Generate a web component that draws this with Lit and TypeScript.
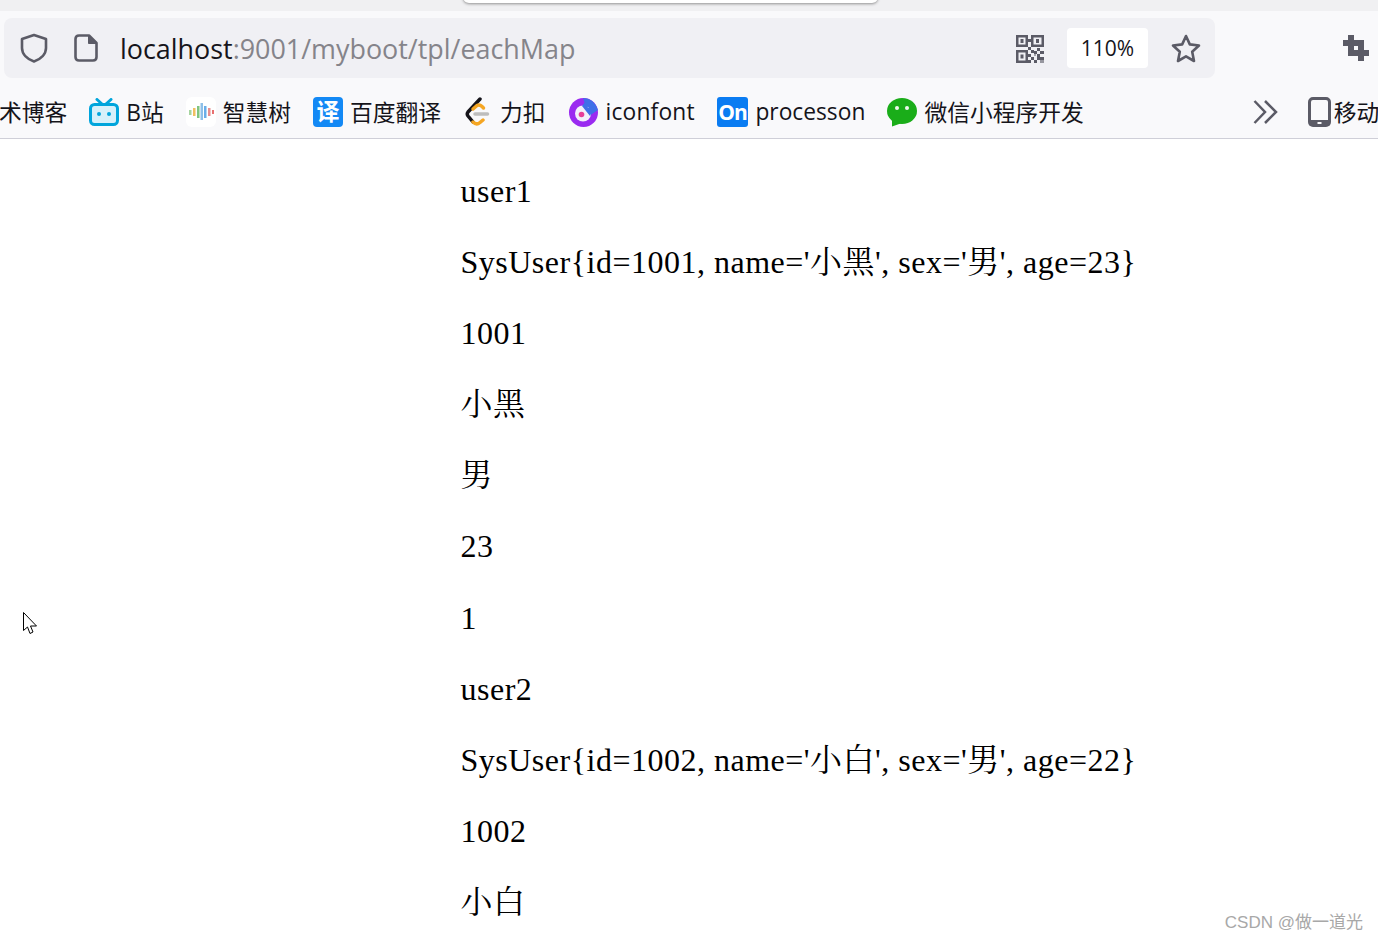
import { LitElement, html, css } from "lit";
import { customElement } from "lit/decorators.js";

const LINES = [
  "user1",
  "SysUser{id=1001, name='小黑', sex='男', age=23}",
  "1001",
  "小黑",
  "男",
  "23",
  "1",
  "user2",
  "SysUser{id=1002, name='小白', sex='男', age=22}",
  "1002",
  "小白",
];

@customElement("app-root")
export class AppRoot extends LitElement {
  static styles = css`
    :host {
      display: block;
      position: relative;
      width: 1378px;
      height: 940px;
      overflow: hidden;
      background: #fff;
    }

    .tabstrip {
      height: 11px;
      background: #f0f0f2;
    }

    .popup {
      position: absolute;
      left: 463px;
      top: -12px;
      width: 415px;
      height: 15px;
      background: #fff;
      border-radius: 6px;
      box-shadow: 0 1px 3px rgba(0,0,0,0.4);
    }

    .toolbar {
      height: 80px;
      box-sizing: border-box;
      padding: 7px 0 0 4px;
      display: flex;
      align-items: flex-start;
      background: #f9f9fb;
    }

    .urlbar {
      width: 1211px;
      height: 60px;
      box-sizing: border-box;
      padding: 0 14px 0 16px;
      display: flex;
      align-items: center;
      background: #f0f0f4;
      border-radius: 8px;
      font-family: "Open Sans", "Noto Sans CJK SC", sans-serif;
      color: #15141a;
    }

    .url {
      flex: 1;
      margin-left: 22px;
      font-size: 26.900px;
      color: #85848a;
    }

    .url b {
      font-weight: 400;
      color: #15141a;
    }

    .zoom {
      width: 81px;
      height: 40px;
      margin: 0 23px;
      display: flex;
      align-items: center;
      justify-content: center;
      background: #fff;
      border-radius: 4px;
      font-size: 21px;
    }

    .doc {
      margin-left: 26px;
    }

    .crop {
      margin: 17px 0 0 128px;
    }

    .bookmarks {
      height: 48px;
      box-sizing: border-box;
      padding-bottom: 5px;
      display: flex;
      align-items: center;
      background: #f9f9fb;
      border-bottom: 1px solid #cfcfd8;
      font-family: "Open Sans", "Noto Sans CJK SC", sans-serif;
      font-size: 22.750px;
      color: #15141a;
      white-space: nowrap;
    }

    .mark {
      display: flex;
      align-items: center;
      gap: 7px;
      margin-right: 22px;
    }

    .mark.first {
      margin-left: -1px;
    }

    .label {
      padding-bottom: 2px;
    }

    .leetcode {
      margin: 0 24px 0 1px;
    }

    .leetcode .label {
      margin-left: 3px;
    }

    .iconfont .label {
      width: 90px;
      letter-spacing: 0.2px;
    }

    .processon .label {
      width: 110px;
    }

    .more {
      margin-left: 147px;
    }

    .device {
      margin: 0 2px 0 30px;
    }

    svg {
      display: block;
      flex: none;
    }

    .content {
      padding: 34px 0 0 460.500px;
      font-family: "Liberation Serif", "Noto Serif CJK SC", "Noto Sans CJK SC", serif;
      font-size: 32px;
      line-height: 36px;
      letter-spacing: 0.5px;
      color: #000;
    }

    .content p {
      margin: 0 0 35.100px;
    }

    .watermark {
      position: absolute;
      right: 15px;
      top: 912px;
      font-family: "Liberation Sans", "Noto Sans CJK SC", sans-serif;
      font-size: 17px;
      line-height: 22px;
      color: #a8a8a8;
    }

    .cursor {
      position: absolute;
      left: 22px;
      top: 611px;
    }
  `;

  render() {
    return html`
      <div class="tabstrip"></div>
      <div class="popup"></div>
      <div class="toolbar">
        <div class="urlbar">
          <svg width="28" height="30" viewBox="0 0 28 30" fill="none" stroke="#5b5b66" stroke-width="2.6">
            <path d="M14 2 L26 6 V15 C26 21 21 26 14 28.5 C7 26 2 21 2 15 V6 Z" stroke-linejoin="round"/>
          </svg>
          <svg class="doc" width="24" height="28" viewBox="0 0 24 28" fill="none" stroke="#5b5b66" stroke-width="2.6">
            <path d="M5 1.500 H15 L22.500 9 V23 Q22.500 26.500 19 26.500 H5 Q1.500 26.500 1.500 23 V5 Q1.500 1.500 5 1.500 Z" stroke-linejoin="round"/>
            <path d="M14.500 2 V9.500 H22" fill="#5b5b66" stroke-width="1"/>
          </svg>
          <div class="url"><b>localhost</b>:9001/myboot/tpl/eachMap</div>
          <svg width="28" height="29" viewBox="0 0 28 29" fill="#5b5b66">
            <path fill-rule="evenodd" d="M0 1h12v12H0z M2.500 3.500v7h7v-7z M15 1h13v12H15z M17.500 3.500v7h8v-7z M0 16h12v13H0z M2.500 18.500v8h7v-8z"/>
            <rect x="4.500" y="5" width="3" height="4"/><rect x="20" y="5" width="3" height="4"/><rect x="4.500" y="20.500" width="3" height="4"/>
            <rect x="12" y="5" width="3" height="3"/>
            <rect x="12" y="13" width="3" height="3"/><rect x="15" y="16" width="3" height="3"/><rect x="21" y="14" width="3" height="3"/>
            <rect x="18" y="17" width="3" height="3"/><rect x="24" y="17" width="4" height="3"/><rect x="12" y="20" width="3" height="3"/>
            <rect x="21" y="20" width="3" height="3"/><rect x="15" y="23" width="3" height="3"/><rect x="18" y="20" width="2" height="2" opacity=".5"/>
            <rect x="24" y="23" width="4" height="3"/><rect x="12" y="26" width="3" height="3"/><rect x="18" y="26" width="3" height="3"/><rect x="21" y="23" width="3" height="3"/>
            <rect x="24" y="26" width="4" height="3" opacity=".6"/>
          </svg>
          <div class="zoom">110%</div>
          <svg width="30" height="29" viewBox="0 0 30 29" fill="none" stroke="#5b5b66" stroke-width="2.6" stroke-linejoin="round">
            <path d="M15 2 L18.800 10.400 L28 11.500 L21.200 17.700 L23 27 L15 22.400 L7 27 L8.800 17.700 L2 11.500 L11.200 10.400 Z"/>
          </svg>
        </div>
        <svg class="crop" width="26" height="26" viewBox="0 0 26 26" fill="none" stroke="#5b5b66" stroke-width="6">
          <path d="M8 0 V18 H26"/>
          <path d="M0 8 H18 V26"/>
        </svg>
      </div>
      <div class="bookmarks">
        <div class="mark first"><span class="label">术博客</span></div>
        <div class="mark">
          <svg width="30" height="28" viewBox="0 0 30 28">
            <path d="M8 1.500 L13 6 M22 1.500 L17 6" stroke="#00a5dc" stroke-width="3" stroke-linecap="round"/>
            <rect x="1.500" y="6.500" width="27" height="20" rx="4" fill="#d6f0fa" stroke="#00a5dc" stroke-width="3"/>
            <circle cx="10" cy="16" r="2" fill="#00a5dc"/><circle cx="20" cy="16" r="2" fill="#00a5dc"/>
          </svg>
          <span class="label">B站</span>
        </div>
        <div class="mark">
          <svg width="30" height="30" viewBox="0 0 30 30">
            <rect width="30" height="30" rx="6" fill="#fff"/>
            <rect x="3" y="13" width="2.500" height="5" fill="#a5d4a0"/><rect x="7" y="11" width="2.500" height="8" fill="#f0c060"/>
            <rect x="11" y="9" width="2.500" height="12" fill="#7fc47f"/><rect x="14.500" y="6" width="2.500" height="17" fill="#8fc0e8"/>
            <rect x="18" y="9" width="2.500" height="12" fill="#6aaee8"/><rect x="22" y="11" width="2.500" height="8" fill="#e88f8f"/>
            <rect x="26" y="13" width="2" height="4" fill="#e87070"/>
          </svg>
          <span class="label">智慧树</span>
        </div>
        <div class="mark">
          <svg width="30" height="30" viewBox="0 0 30 30">
            <rect width="30" height="30" rx="4" fill="#1389f5"/>
            <text x="15" y="23" text-anchor="middle" font-size="23" font-weight="700" fill="#fff" font-family="Noto Sans CJK SC">译</text>
          </svg>
          <span class="label">百度翻译</span>
        </div>
        <div class="mark leetcode">
          <svg width="26" height="30" viewBox="0 0 26 30" fill="none" stroke-width="3.500" stroke-linecap="round" stroke-linejoin="round">
            <path d="M16 2 L4 15 Q2.500 17 4 19 L9 25" stroke="#15141a"/>
            <path d="M9 25 Q12.500 28.500 16 25.500 L19 23" stroke="#f5a623"/>
            <path d="M9 12 L13 8.500 Q15.500 7 18 9.500 L19.500 11" stroke="#f5a623"/>
            <path d="M11 17 H23.500" stroke="#bdbdbd"/>
          </svg>
          <span class="label">力扣</span>
        </div>
        <div class="mark iconfont">
          <svg width="29" height="29" viewBox="0 0 29 29">
            <circle cx="14.500" cy="14.500" r="14.500" fill="#9a2bf0"/>
            <path d="M14 0 Q25 0 29 12 L20 18 Z" fill="#3f6fe8"/>
            <circle cx="14" cy="15.500" r="8" fill="#f4f0fb"/>
            <path d="M13 8 L17 3 L19 10 L25 9 L21 18 Z" fill="#3f6fe8"/>
            <circle cx="12.500" cy="16.500" r="2.800" fill="#e83f9a"/>
          </svg>
          <span class="label">iconfont</span>
        </div>
        <div class="mark processon">
          <svg width="31" height="30" viewBox="0 0 31 30">
            <rect width="31" height="30" rx="3" fill="#0a7cf2"/>
            <text x="15.500" y="22.500" text-anchor="middle" font-size="21" font-weight="700" letter-spacing="-1" fill="#fff" font-family="Open Sans">On</text>
          </svg>
          <span class="label">processon</span>
        </div>
        <div class="mark">
          <svg width="30" height="29" viewBox="0 0 30 29">
            <ellipse cx="15" cy="13" rx="15" ry="13" fill="#1aad19"/>
            <path d="M5 21 L5 28.500 L15 25 Z" fill="#1aad19"/>
            <circle cx="10" cy="10" r="2" fill="#f0f8f0"/><circle cx="20" cy="10" r="2" fill="#f0f8f0"/>
          </svg>
          <span class="label">微信小程序开发</span>
        </div>
        <svg class="more" width="25" height="24" viewBox="0 0 25 24" fill="none" stroke="#5b5b66" stroke-width="2.500">
          <path d="M1.500 1 L12 12 L1.500 23 M12 1 L23 12 L12 23"/>
        </svg>
        <svg class="device" width="24" height="30" viewBox="0 0 24 30" fill="none">
          <rect x="1.500" y="1.500" width="20" height="27" rx="3.500" stroke="#5b5b66" stroke-width="3"/>
          <rect x="1.500" y="23" width="20" height="5.500" fill="#5b5b66"/>
          <rect x="9.500" y="25" width="4" height="2" fill="#f9f9fb"/>
        </svg>
        <span class="label">移动</span>
      </div>
      <div class="content">
        ${LINES.map((line) => html`<p>${line}</p>`)}
      </div>
      <svg class="cursor" width="17" height="25" viewBox="0 0 17 25" fill="#fff" stroke="#000" stroke-width="1">
        <path d="M1.500 1.500 V19.500 L5.500 16 L8 22.500 L11 21 L8.500 15 H14.500 Z"/>
      </svg>
      <div class="watermark">CSDN @做一道光</div>
    `;
  }
}
